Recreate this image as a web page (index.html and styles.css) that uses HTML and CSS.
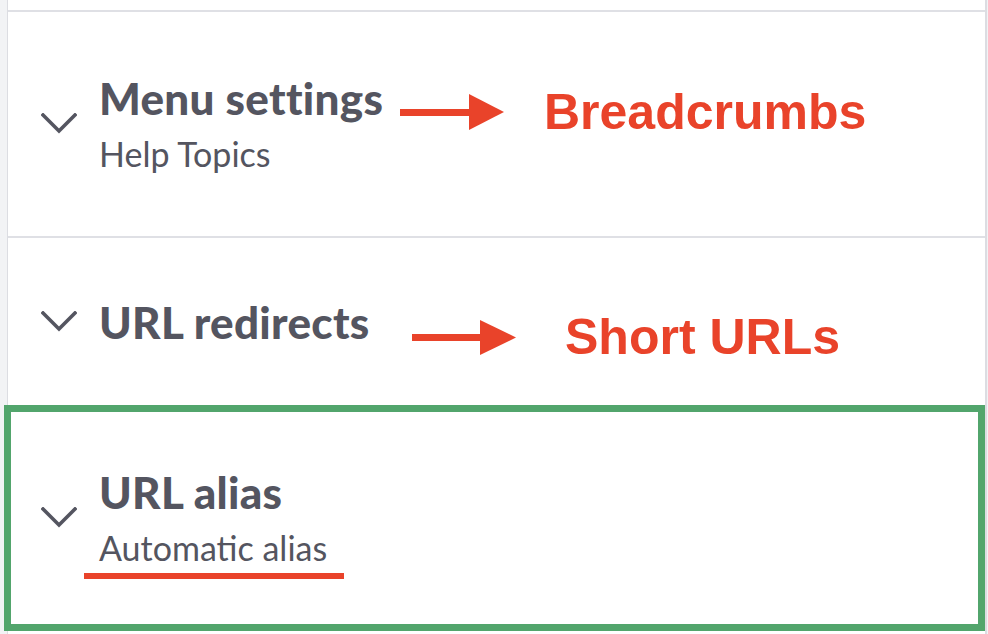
FILE: index.html
```html
<html lang="en">
<head>
  <meta charset="UTF-8" />
  <meta name="viewport" content="width=device-width, initial-scale=1.0" />
  <title>Node sidebar</title>
  <link rel="stylesheet" href="styles.css">
</head>
<body>
  <div class="sidebar">
    <!-- bottom of the previous panel -->
    <div class="panel panel-stub"></div>

    <!-- Menu settings -->
    <div class="panel panel-menu">
      <svg class="chevron" width="36" height="22" viewBox="0 0 36 22"><polyline points="2,2 18,18 34,2" /></svg>
      <div class="summary">
        <div class="title">Menu settings</div>
        <div class="sub">Help Topics</div>
      </div>
      <div class="note note-menu">
        <svg class="arrow" width="104" height="36" viewBox="0 0 104 36"><rect x="0" y="15" width="70" height="7" /><polygon points="69,0 104,18 69,36" /></svg>
        <span class="note-label note-label-menu">Breadcrumbs</span>
      </div>
    </div>

    <!-- URL redirects -->
    <div class="panel panel-redirects">
      <svg class="chevron" width="36" height="22" viewBox="0 0 36 22"><polyline points="2,2 18,18 34,2" /></svg>
      <div class="summary">
        <div class="title">URL redirects</div>
      </div>
      <div class="note note-redirects">
        <svg class="arrow" width="104" height="35" viewBox="0 0 104 35"><rect x="0" y="14" width="70" height="7" /><polygon points="68,0 104,17.5 68,35" /></svg>
        <span class="note-label note-label-redirects">Short URLs</span>
      </div>
    </div>

    <!-- URL alias (highlighted) -->
    <div class="panel panel-alias">
      <svg class="chevron" width="36" height="22" viewBox="0 0 36 22"><polyline points="2,2 18,18 34,2" /></svg>
      <div class="summary">
        <div class="title">URL alias</div>
        <div class="sub">Automatic alias</div>
      </div>
      <div class="underline"></div>
    </div>
  </div>
</body>
</html>
```

FILE: styles.css
```css
/* Base */
body {
  margin: 0;
  padding: 0;
  background: #f2f3f5;
  font-family: "Source Sans Pro", Lato, "Noto Sans", sans-serif;
  color: #545560;
  height: 634px;
  overflow: hidden;
}
/* Sidebar column that holds the details panels */
.sidebar {
  margin-left: 7px;
  width: 977px;
  height: 634px;
  background: #fff;
  border-left: 1px solid #dcdde2;
  border-right: 2px solid #dcdde2;
}
.panel {
  position: relative;
  display: flex;
  align-items: center;
  padding-left: 33px;
  border-top: 2px solid #dfe0e5;
}
.panel-stub {
  height: 10px;
  border-top: none;
}
.panel-menu {
  height: 224px;
}
.panel-redirects {
  height: 167px;
}
/* Green highlight around the URL alias panel */
.panel-alias {
  height: 212px;
  margin-left: -4px;
  padding-left: 30px;
  border: 7px solid #52a56c;
}
/* Chevron */
.chevron {
  flex: none;
  display: block;
}
.chevron polyline {
  fill: none;
  stroke: #545560;
  stroke-width: 3.6;
  stroke-linecap: square;
}
.summary {
  margin-left: 22px;
}
.title {
  font-size: 44px;
  font-weight: 900;
  line-height: 52px;
  letter-spacing: 0.3px;
}
.sub {
  font-size: 34px;
  line-height: 46px;
  margin-top: 7px;
}
/* Red annotations */
.note {
  position: absolute;
  display: flex;
  align-items: center;
}
.note-menu {
  left: 392px;
  top: 75px;
}
.note-redirects {
  left: 404px;
  top: 74px;
}
.arrow {
  display: block;
  fill: #e9432a;
}
.note-label {
  font-family: "Liberation Sans", Arial, sans-serif;
  font-weight: 700;
  font-size: 50px;
  line-height: 50px;
  color: #e9432a;
}
.note-label-menu {
  margin-left: 40px;
}
.note-label-redirects {
  margin-left: 49px;
}
.underline {
  position: absolute;
  left: 73px;
  top: 161px;
  width: 260px;
  height: 6px;
  background: #e9432a;
}
```
